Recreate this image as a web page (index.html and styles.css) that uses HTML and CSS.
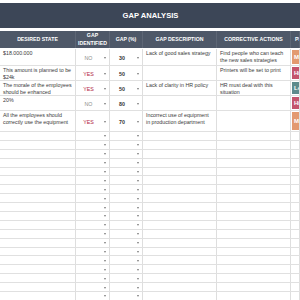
FILE: index.html
```html
<!DOCTYPE html>
<html>
<head>
<meta charset="utf-8">
<link rel="stylesheet" href="styles.css">
</head>
<body>
<div class="title">GAP ANALYSIS</div>
<div class="sheet">
  <div class="row head">
    <div class="c">DESIRED STATE</div>
    <div class="c">GAP<br>IDENTIFIED</div>
    <div class="c">GAP (%)</div>
    <div class="c">GAP DESCRIPTION</div>
    <div class="c">CORRECTIVE ACTIONS</div>
    <div class="c pr">PRIORITY</div>
  </div>

  <div class="row r1">
    <div class="c t">$18.000.000</div>
    <div class="c dd"><span class="v no">NO</span><span class="ar"></span></div>
    <div class="c dd"><span class="v num">30</span><span class="ar"></span></div>
    <div class="c t">Lack of good sales strategy</div>
    <div class="c t">Find people who can teach the new sales strategies</div>
    <div class="c p"><span class="tag med">Medium</span></div>
  </div>
  <div class="row r2">
    <div class="c t">This amount is planned to be $24k</div>
    <div class="c dd"><span class="v yes">YES</span><span class="ar"></span></div>
    <div class="c dd"><span class="v num">50</span><span class="ar"></span></div>
    <div class="c t"></div>
    <div class="c t">Printers will be set to print</div>
    <div class="c p"><span class="tag high">High</span></div>
  </div>
  <div class="row r3">
    <div class="c t">The morale of the employees should be enhanced</div>
    <div class="c dd"><span class="v yes">YES</span><span class="ar"></span></div>
    <div class="c dd"><span class="v num">50</span><span class="ar"></span></div>
    <div class="c t">Lack of clarity in HR policy</div>
    <div class="c t">HR must deal with this situation</div>
    <div class="c p"><span class="tag low">Low</span></div>
  </div>
  <div class="row r4">
    <div class="c t">20%</div>
    <div class="c dd"><span class="v no">NO</span><span class="ar"></span></div>
    <div class="c dd"><span class="v num">80</span><span class="ar"></span></div>
    <div class="c t"></div>
    <div class="c t"></div>
    <div class="c p"><span class="tag high">High</span></div>
  </div>
  <div class="row r5">
    <div class="c t">All the employees should correctly use the equipment</div>
    <div class="c dd"><span class="v yes">YES</span><span class="ar"></span></div>
    <div class="c dd"><span class="v num">70</span><span class="ar"></span></div>
    <div class="c t">Incorrect use of equipment in production department</div>
    <div class="c t"></div>
    <div class="c p"><span class="tag med">Medium</span></div>
  </div>

  <div class="row e"><div class="c"></div><div class="c dd"><span class="v"></span><span class="ar"></span></div><div class="c dd"><span class="v"></span><span class="ar"></span></div><div class="c"></div><div class="c"></div><div class="c p"></div></div>
  <div class="row e"><div class="c"></div><div class="c dd"><span class="v"></span><span class="ar"></span></div><div class="c dd"><span class="v"></span><span class="ar"></span></div><div class="c"></div><div class="c"></div><div class="c p"></div></div>
  <div class="row e"><div class="c"></div><div class="c dd"><span class="v"></span><span class="ar"></span></div><div class="c dd"><span class="v"></span><span class="ar"></span></div><div class="c"></div><div class="c"></div><div class="c p"></div></div>
  <div class="row e"><div class="c"></div><div class="c dd"><span class="v"></span><span class="ar"></span></div><div class="c dd"><span class="v"></span><span class="ar"></span></div><div class="c"></div><div class="c"></div><div class="c p"></div></div>
  <div class="row e"><div class="c"></div><div class="c dd"><span class="v"></span><span class="ar"></span></div><div class="c dd"><span class="v"></span><span class="ar"></span></div><div class="c"></div><div class="c"></div><div class="c p"></div></div>
  <div class="row e"><div class="c"></div><div class="c dd"><span class="v"></span><span class="ar"></span></div><div class="c dd"><span class="v"></span><span class="ar"></span></div><div class="c"></div><div class="c"></div><div class="c p"></div></div>
  <div class="row e"><div class="c"></div><div class="c dd"><span class="v"></span><span class="ar"></span></div><div class="c dd"><span class="v"></span><span class="ar"></span></div><div class="c"></div><div class="c"></div><div class="c p"></div></div>
  <div class="row e"><div class="c"></div><div class="c dd"><span class="v"></span><span class="ar"></span></div><div class="c dd"><span class="v"></span><span class="ar"></span></div><div class="c"></div><div class="c"></div><div class="c p"></div></div>
  <div class="row e"><div class="c"></div><div class="c dd"><span class="v"></span><span class="ar"></span></div><div class="c dd"><span class="v"></span><span class="ar"></span></div><div class="c"></div><div class="c"></div><div class="c p"></div></div>
  <div class="row e"><div class="c"></div><div class="c dd"><span class="v"></span><span class="ar"></span></div><div class="c dd"><span class="v"></span><span class="ar"></span></div><div class="c"></div><div class="c"></div><div class="c p"></div></div>
  <div class="row e"><div class="c"></div><div class="c dd"><span class="v"></span><span class="ar"></span></div><div class="c dd"><span class="v"></span><span class="ar"></span></div><div class="c"></div><div class="c"></div><div class="c p"></div></div>
  <div class="row e"><div class="c"></div><div class="c dd"><span class="v"></span><span class="ar"></span></div><div class="c dd"><span class="v"></span><span class="ar"></span></div><div class="c"></div><div class="c"></div><div class="c p"></div></div>
  <div class="row e"><div class="c"></div><div class="c dd"><span class="v"></span><span class="ar"></span></div><div class="c dd"><span class="v"></span><span class="ar"></span></div><div class="c"></div><div class="c"></div><div class="c p"></div></div>
  <div class="row e"><div class="c"></div><div class="c dd"><span class="v"></span><span class="ar"></span></div><div class="c dd"><span class="v"></span><span class="ar"></span></div><div class="c"></div><div class="c"></div><div class="c p"></div></div>
  <div class="row e"><div class="c"></div><div class="c dd"><span class="v"></span><span class="ar"></span></div><div class="c dd"><span class="v"></span><span class="ar"></span></div><div class="c"></div><div class="c"></div><div class="c p"></div></div>
  <div class="row e"><div class="c"></div><div class="c dd"><span class="v"></span><span class="ar"></span></div><div class="c dd"><span class="v"></span><span class="ar"></span></div><div class="c"></div><div class="c"></div><div class="c p"></div></div>
  <div class="row e"><div class="c"></div><div class="c dd"><span class="v"></span><span class="ar"></span></div><div class="c dd"><span class="v"></span><span class="ar"></span></div><div class="c"></div><div class="c"></div><div class="c p"></div></div>
  <div class="row e"><div class="c"></div><div class="c dd"><span class="v"></span><span class="ar"></span></div><div class="c dd"><span class="v"></span><span class="ar"></span></div><div class="c"></div><div class="c"></div><div class="c p"></div></div>
  <div class="row e"><div class="c"></div><div class="c dd"><span class="v"></span><span class="ar"></span></div><div class="c dd"><span class="v"></span><span class="ar"></span></div><div class="c"></div><div class="c"></div><div class="c p"></div></div>
  <div class="row e"><div class="c"></div><div class="c dd"><span class="v"></span><span class="ar"></span></div><div class="c dd"><span class="v"></span><span class="ar"></span></div><div class="c"></div><div class="c"></div><div class="c p"></div></div>
</div>
</body>
</html>
```

FILE: styles.css
```css
html, body {
  margin: 0;
  padding: 0;
  background: #ffffff;
  overflow: hidden;
}
body {
  width: 300px;
  height: 300px;
  font-family: "Liberation Sans", Arial, sans-serif;
  color: #3a3a3a;
}
.title {
  margin-top: 3px;
  height: 25px;
  background: #3c4657;
  color: #ffffff;
  font-weight: bold;
  font-size: 7.6px;
  display: flex;
  align-items: center;
  justify-content: center;
  padding-left: 1px;
}
.sheet {
  margin-top: 3px;
  width: 300px;
  overflow: hidden;
}
.row {
  display: grid;
  grid-template-columns: 76px 34px 33px 74px 74px 1fr;
  border-bottom: 1px solid #e0e0e0;
  box-sizing: border-box;
}
.c {
  border-right: 1px solid #dedede;
  box-sizing: border-box;
  overflow: hidden;
  min-width: 0;
}
.head {
  height: 18px;
  background: #4e5868;
  border-bottom: 1px solid #ffffff;
}
.head .c {
  color: #ffffff;
  font-weight: bold;
  font-size: 5.2px;
  line-height: 7.5px;
  display: flex;
  align-items: center;
  justify-content: center;
  text-align: center;
  border-right: 1px solid #5d6675;
}
.head .pr {
  justify-content: flex-start;
  padding-left: 4px;
  white-space: nowrap;
}
.r1 { height: 17px; }
.r2 { height: 15px; }
.r3 { height: 15px; }
.r4 { height: 15px; }
.r5 { height: 21px; }
.e { height: 8.9px; }
.t {
  font-size: 5.3px;
  line-height: 7.3px;
  padding: 1px 2px 0 3px;
}
.dd {
  display: grid;
  grid-template-columns: 1fr 8px;
  align-items: center;
  padding-top: 1px;
}
.v {
  text-align: center;
  font-size: 5.3px;
}
.no { color: #8a8a8a; }
.yes { color: #b3243f; }
.num { color: #333333; font-weight: bold; }
.ar {
  justify-self: center;
  width: 0;
  height: 0;
  border-left: 1.5px solid transparent;
  border-right: 1.5px solid transparent;
  border-top: 2px solid #7a7a7a;
}
.p {
  padding: 1px 0 1px 1px;
  display: flex;
}
.tag {
  flex: 1;
  color: #ffffff;
  font-weight: bold;
  font-size: 6px;
  display: flex;
  align-items: center;
  padding-left: 2px;
  white-space: nowrap;
  overflow: hidden;
}
.med { background: #e39a70; }
.high { background: #c4546c; }
.low { background: #5e8b8c; }
```
